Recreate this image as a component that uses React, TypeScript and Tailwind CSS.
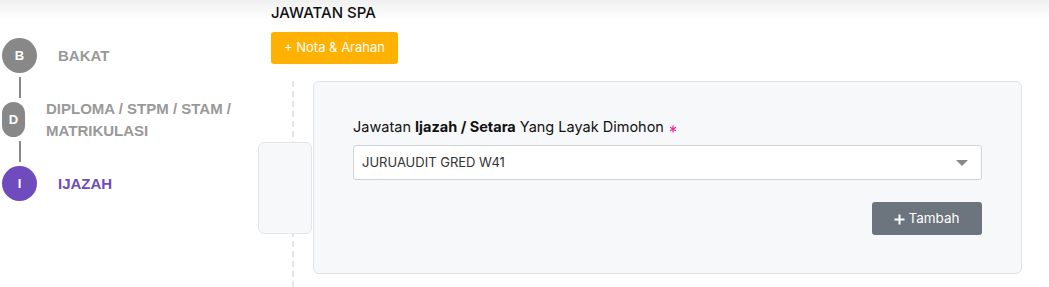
import React from "react";

type Step = { letter: string; label: string; active?: boolean; narrow?: boolean };

const steps: Step[] = [
  { letter: "B", label: "BAKAT" },
  { letter: "D", label: "DIPLOMA / STPM / STAM / MATRIKULASI", narrow: true },
  { letter: "I", label: "IJAZAH", active: true },
];

function Stepper() {
  return (
    <div className="pt-[38px] pl-[2px] w-[256px] shrink-0">
      {steps.map((s, i) => (
        <div key={s.letter}>
          {i > 0 && <div className="ml-[17px] my-[4px] h-[21px] w-[2px] bg-[#888]" />}
          <div className="flex h-[35px] items-center gap-[21px]">
            <div
              className={`flex h-[35px] ${s.narrow ? "w-[23px]" : "w-[35px]"} shrink-0 items-center justify-center rounded-full text-[13px] font-bold text-white ${
                s.active ? "bg-[#6f4bbd]" : "bg-[#888888]"
              }`}
            >
              {s.letter}
            </div>
            <div
              className={`text-[15px] font-bold leading-[22px] ${s.active ? "text-[#6f4bbd]" : "text-[#999999]"} ${
                s.narrow ? "w-[200px]" : ""
              }`}
            >
              {s.label}
            </div>
          </div>
        </div>
      ))}
    </div>
  );
}

export default function App() {
  return (
    <div className="h-[287px] w-[1049px] overflow-hidden bg-[linear-gradient(to_bottom,#f0f0f0,#ffffff_20px)] font-['Liberation_Sans',sans-serif]">
      <div className="flex">
        <Stepper />
        <div className="flex-1 pl-[2px]">
          <div className="pl-[13px] pt-[4px]">
            <h2 className="font-['Inter',sans-serif] text-[15px] font-medium leading-[18px] text-[#111]">JAWATAN SPA</h2>
            <button className="mt-[10px] h-[32px] rounded-[3px] bg-[#ffb100] px-[13px] font-['Inter',sans-serif] text-[13px] text-white">
              + Nota &amp; Arahan
            </button>
          </div>
          <div className="relative mt-[17px] flex h-[206px] items-start">
            <div className="absolute left-[34px] top-0 bottom-0 w-0 border-l-2 border-dashed border-[#e4e4e4]" />
            <div className="relative mt-[61px] h-[92px] w-[54px] shrink-0 rounded-[6px] border border-[#e3e6ea] bg-[#f7f8fa]" />
            <div className="relative ml-[1px] h-[193px] w-[709px] rounded-[6px] border border-[#dfe3e8] bg-[#f7f8fa] pl-[39px] pr-[39px] pt-[36px] font-['Inter',sans-serif]">
              <label className="flex items-center gap-[5px] text-[14.5px] leading-[18px] text-[#111]">
                <span>
                  Jawatan <span className="font-bold">Ijazah / Setara</span> Yang Layak Dimohon
                </span>
                <svg width="8" height="8" viewBox="0 0 8 8" className="mt-[3px]">
                  <path d="M4 0.5v7M1 2.2l6 3.6M7 2.2l-6 3.6" stroke="#f5239c" strokeWidth="1.2" />
                </svg>
              </label>
              <div className="mt-[9px] flex h-[35px] items-center justify-between rounded-[3px] border border-[#cfd3d8] bg-white pl-[8px] pr-[13px]">
                <span className="text-[13px] text-[#333]">JURUAUDIT GRED W41</span>
                <span className="h-0 w-0 border-x-[6px] border-t-[6px] border-x-transparent border-t-[#888]" />
              </div>
              <div className="mt-[22px] flex justify-end">
                <button className="flex h-[33px] w-[110px] items-center justify-center gap-[3px] rounded-[3px] bg-[#6c757d] text-[13.5px] text-white">
                  <svg width="11" height="11" viewBox="0 0 11 11" className="mt-[1px]">
                    <path d="M5.5 0.5v10M0.5 5.5h10" stroke="white" strokeWidth="2" />
                  </svg>
                  Tambah
                </button>
              </div>
            </div>
          </div>
        </div>
      </div>
    </div>
  );
}
